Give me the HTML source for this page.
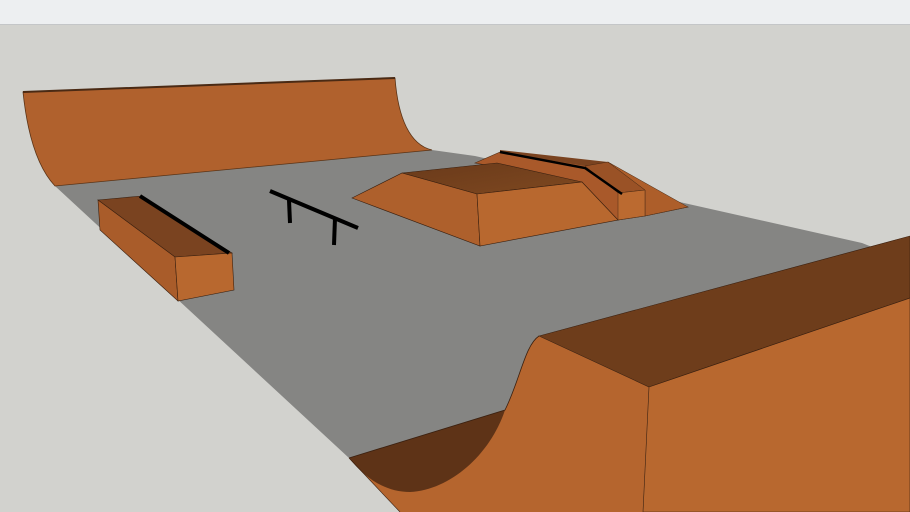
<!DOCTYPE html>
<html><head><meta charset="utf-8"><style>
html,body{margin:0;padding:0;width:910px;height:512px;overflow:hidden;background:#d2d2ce}
svg{display:block}
</style></head><body>
<svg width="910" height="512" viewBox="0 0 910 512" xmlns="http://www.w3.org/2000/svg">
<defs>
<linearGradient id="top" x1="0" y1="0" x2="1" y2="1">
<stop offset="0" stop-color="#6a3a1a"/><stop offset="1" stop-color="#7e4820"/>
</linearGradient>
</defs>
<rect x="0" y="0" width="910" height="24" fill="#edeff1"/>
<rect x="0" y="24" width="910" height="1" fill="#c4c6c8"/>
<rect x="0" y="25" width="910" height="487" fill="#d2d2ce"/>
<!-- floor -->
<polygon points="55,186 432,150 475,156 862,243 910,262 539,336 505,410 349,458" fill="#858583"/>
<!-- back quarter pipe -->
<path d="M23,92 L395,78 C398,118 410,145 432,150 L55,186 C40,170 28,140 23,92 Z" fill="#b0612d" stroke="#5a3316" stroke-width="0.8"/>
<path d="M23,92 L395,78" stroke="#4a2a14" stroke-width="2"/>
<!-- left box -->
<polygon points="98,200 142,196 232,253 175,257" fill="#7a4320" stroke="#3a2010" stroke-width="0.6"/>
<polygon points="98,200 175,257 178,301 100,230" fill="#a95c2a" stroke="#3a2010" stroke-width="0.6"/>
<polygon points="175,257 232,253 234,290 178,301" fill="#b8682f" stroke="#3a2010" stroke-width="0.6"/>
<line x1="140" y1="196" x2="229" y2="253" stroke="#000" stroke-width="4"/>
<!-- rail -->
<line x1="270" y1="191" x2="358" y2="228" stroke="#000" stroke-width="4"/>
<line x1="289" y1="200" x2="290" y2="223" stroke="#000" stroke-width="4"/>
<line x1="335" y1="218" x2="334" y2="245" stroke="#000" stroke-width="4"/>
<!-- back platform -->
<polygon points="475,163 500,152 605,163 645,190 688,207 645,216 618,220 582,182" fill="#a9592a" stroke="#4a2a14" stroke-width="0.6"/>
<polygon points="500,152 585,166 608,162 500,150" fill="#7a4320"/>
<polygon points="585,166 608,162 645,190 618,193" fill="#9a5226" stroke="#4a2a14" stroke-width="0.5"/>
<polygon points="608,162 688,207 645,216 645,190" fill="#ad5e2a" stroke="#4a2a14" stroke-width="0.5"/>
<polygon points="618,193 645,190 645,216 618,220" fill="#bb6a30" stroke="#4a2a14" stroke-width="0.5"/>
<polyline points="500,152 585,168 622,194" fill="none" stroke="#000" stroke-width="2.5"/>
<!-- pyramid -->
<polygon points="402,173 497,163 582,182 477,194" fill="url(#top)" stroke="#3a2010" stroke-width="0.6"/>
<polygon points="352,198 402,173 477,194 480,246" fill="#ae602c" stroke="#3a2010" stroke-width="0.6"/>
<polygon points="477,194 582,182 618,220 480,246" fill="#b8682f" stroke="#3a2010" stroke-width="0.6"/>
<!-- front ramp -->
<path d="M349,458 L505,410 C520,380 525,345 539,336 L649,387 L643,512 L400,512 Z" fill="#b5652e"/>
<path d="M349,458 L505,410 C490,455 450,490 410,492 C385,492 365,478 349,458 Z" fill="#5e3317"/>
<polygon points="539,336 910,236 910,298 649,387" fill="#6e3d1b" stroke="#3a2010" stroke-width="0.6"/>
<polygon points="649,387 910,298 910,512 643,512" fill="#b8682f" stroke="#3a2010" stroke-width="0.6"/>
<path d="M349,458 L505,410 C520,380 525,345 539,336" fill="none" stroke="#3a2010" stroke-width="0.8"/>
<line x1="349" y1="458" x2="400" y2="512" stroke="#3a2010" stroke-width="0.6"/>
</svg>
</body></html>
